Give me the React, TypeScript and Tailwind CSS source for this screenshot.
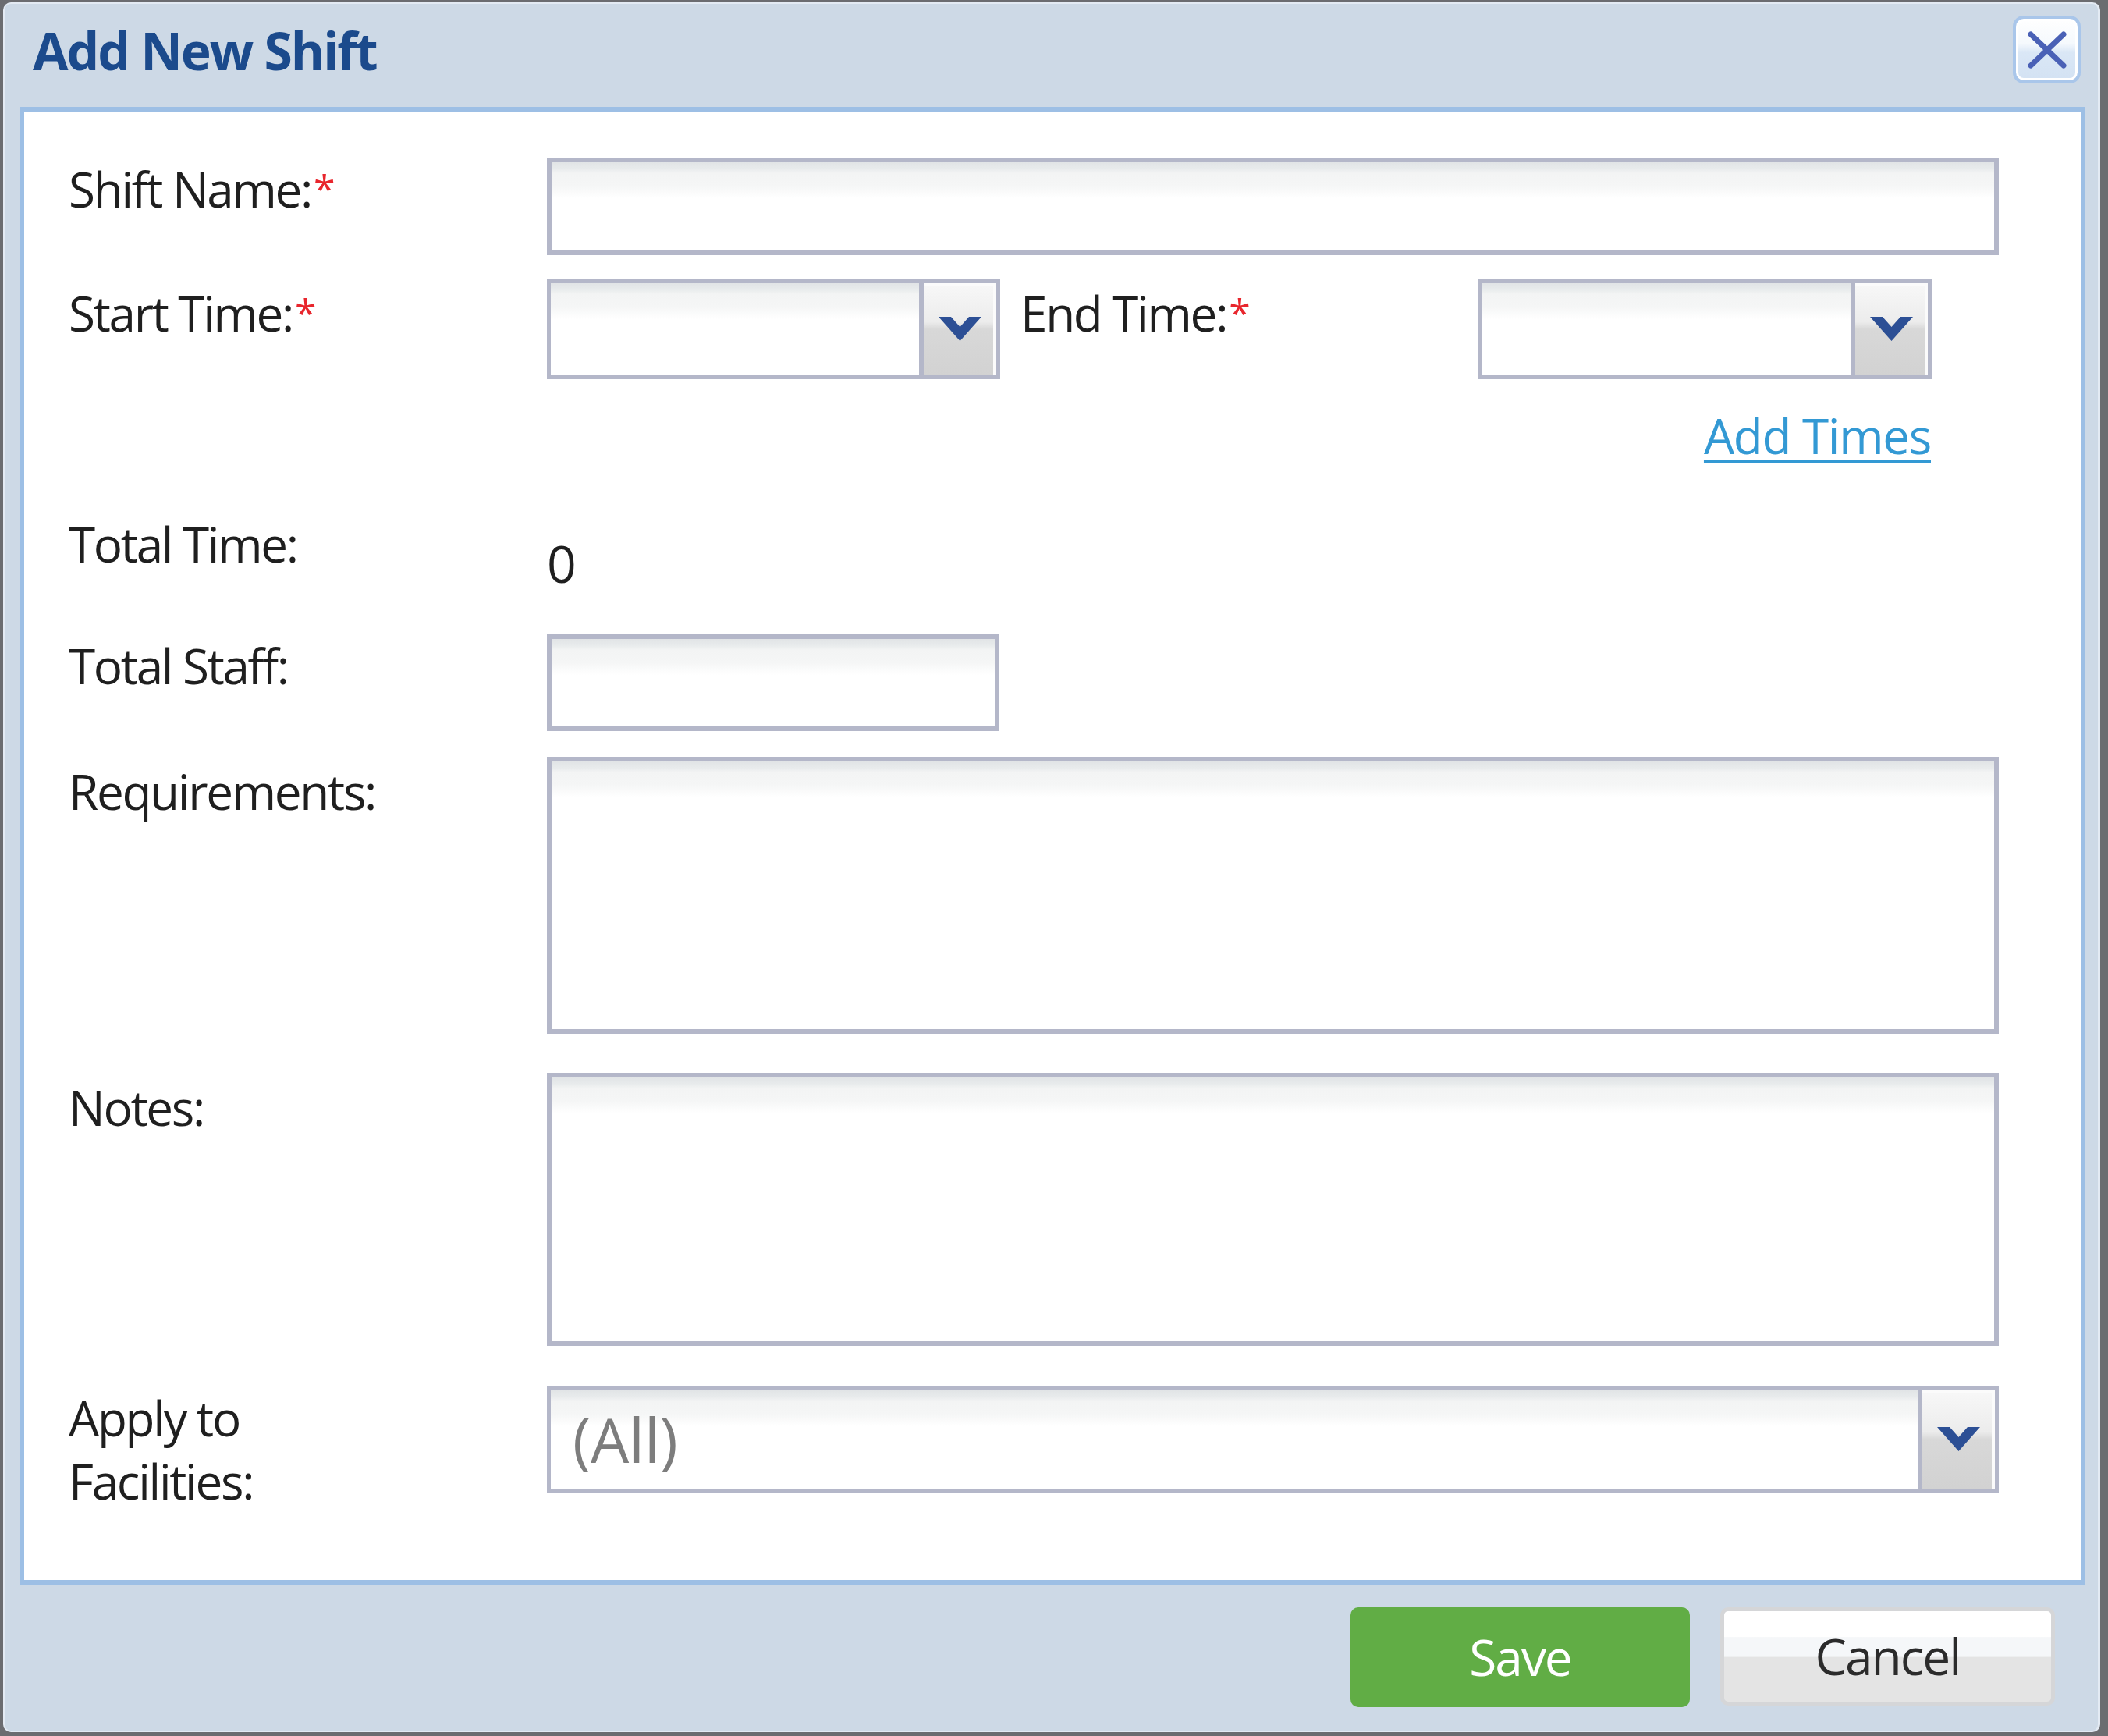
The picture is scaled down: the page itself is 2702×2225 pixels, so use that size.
import type { ReactNode } from 'react'

const fieldBg =
  'bg-[linear-gradient(to_bottom,#e1e4e6_0px,#e8ebec_8px,#f3f4f4_14px,#f5f6f6_30px,#ffffff_46px,#ffffff_100%)]'

function Chevron() {
  return (
    <svg width="55" height="32" viewBox="0 0 55 32">
      <polygon points="0,0 16,0 27.5,13 39,0 55,0 27.5,31" fill="#2c4f95" />
    </svg>
  )
}

function Star() {
  return <span className="ml-[3px] align-[5px] text-[50px] text-[#e8262d]">*</span>
}

function Label({ children, req }: { children: ReactNode; req?: boolean }) {
  return (
    <div className="w-[613px] shrink-0 text-[62px] leading-[81px] tracking-[-2.3px] text-[#1f1f1f]">
      {children}
      {req && <Star />}
    </div>
  )
}

function Combo({ className, children }: { className: string; children?: ReactNode }) {
  return (
    <div className={`flex border-[5px] border-[#b4b7c9] ${className}`}>
      <div className={`flex flex-1 items-center pl-[28px] ${fieldBg}`}>{children}</div>
      <div className="flex w-[99px] items-center justify-center border-l-[6px] border-[#b4b7c9] bg-[linear-gradient(to_bottom,#f8f8f8_0%,#ececec_42%,#d8d8d8_50%,#d2d2d2_100%)] shadow-[inset_-4px_4px_0_#fbfbfb]">
        <Chevron />
      </div>
    </div>
  )
}

export default function App() {
  return (
    <div className="h-[2225px] w-[2702px] bg-[#6b6c70] pt-[3px] pr-[10px] pb-[5px] pl-[4px] font-['Open_Sans','Noto_Sans',sans-serif]">
      <div className="flex h-full flex-col rounded-[10px] border-2 border-r-[3px] border-[#e3eaf3] bg-[#cdd9e6]">
        {/* header */}
        <div className="flex h-[132px] shrink-0 items-start justify-between pr-[22px] pl-[36px]">
          <h1 className="mt-[26px] text-[66px] leading-none font-bold tracking-[-2px] text-[#1b4a8c]">
            Add New Shift
          </h1>
          <button className="mt-[15px] flex h-[87px] w-[87px] items-center justify-center rounded-[14px] border-4 border-[#a9c6ea] bg-[linear-gradient(to_bottom,#ffffff_0%,#f5f9fd_40%,#dae7f6_55%,#d3e2f3_100%)] shadow-[inset_0_0_0_3px_#ffffff]">
            <svg width="50" height="48" viewBox="0 0 50 48">
              <path d="M4 4 L46 44 M46 4 L4 44" stroke="#4a61b6" strokeWidth="7" strokeLinecap="round" />
            </svg>
          </button>
        </div>

        {/* form panel */}
        <div className="mr-[16px] ml-[19px] border-[6px] border-[#9dbfe5] bg-white pt-[59px] pr-[105px] pb-[86px] pl-[57px]">
          <div className="flex h-[125px]">
            <Label req>Shift Name:</Label>
            <div className={`h-full flex-1 border-[6px] border-[#b4b7c9] ${fieldBg}`} />
          </div>

          <div className="mt-[31px] flex h-[128px]">
            <div className="mt-[3px]">
              <Label req>Start Time:</Label>
            </div>
            <Combo className="w-[581px]" />
            <div className="mt-[3px] w-[612px] shrink-0 pl-[26px] text-[62px] leading-[81px] tracking-[-2.3px] text-[#1f1f1f]">
              End Time:
              <Star />
            </div>
            <Combo className="w-[582px]" />
          </div>

          <div className="mt-[32px] flex">
            <div className="w-[613px] shrink-0" />
            <div className="w-[1774px] text-right text-[62px] leading-[81px] tracking-[-1.3px] text-[#3399d4] underline decoration-[3px] underline-offset-[8px]">
              Add Times
            </div>
          </div>

          <div className="mt-[58px] flex">
            <Label>Total Time:</Label>
            <div className="pt-[24px] text-[66px] leading-[81px] text-[#1f1f1f]">0</div>
          </div>

          <div className="mt-[51px] flex h-[124px]">
            <Label>Total Staff:</Label>
            <div className={`h-full w-[580px] border-[6px] border-[#b4b7c9] ${fieldBg}`} />
          </div>

          <div className="mt-[33px] flex h-[355px]">
            <div className="mt-[4px]">
              <Label>Requirements:</Label>
            </div>
            <div className={`h-full flex-1 border-[6px] border-[#b4b7c9] ${fieldBg}`} />
          </div>

          <div className="mt-[50px] flex h-[350px]">
            <div className="mt-[4px]">
              <Label>Notes:</Label>
            </div>
            <div className={`h-full flex-1 border-[6px] border-[#b4b7c9] ${fieldBg}`} />
          </div>

          <div className="mt-[52px] flex items-start">
            <Label>
              Apply to
              <br />
              Facilities:
            </Label>
            <Combo className="h-[136px] flex-1">
              <span className="text-[78px] leading-none text-[#7d7d7d]">(All)</span>
            </Combo>
          </div>
        </div>

        {/* footer */}
        <div className="flex flex-1 items-start justify-end gap-[39px] pt-[29px] pr-[55px]">
          <button className="flex h-[128px] w-[435px] items-center justify-center rounded-[10px] bg-[#61ad45] text-[64px] tracking-[-2px] text-white">
            Save
          </button>
          <button className="flex h-[126px] w-[429px] items-center justify-center rounded-[10px] border-[5px] border-[#d5d6d8] bg-[linear-gradient(to_bottom,#ffffff_0%,#ffffff_28%,#f5f7f9_29%,#f5f7f9_50%,#e4e4e4_51%,#e4e4e4_100%)] text-[64px] tracking-[-2px] text-[#2b2b2b]">
            Cancel
          </button>
        </div>
      </div>
    </div>
  )
}
